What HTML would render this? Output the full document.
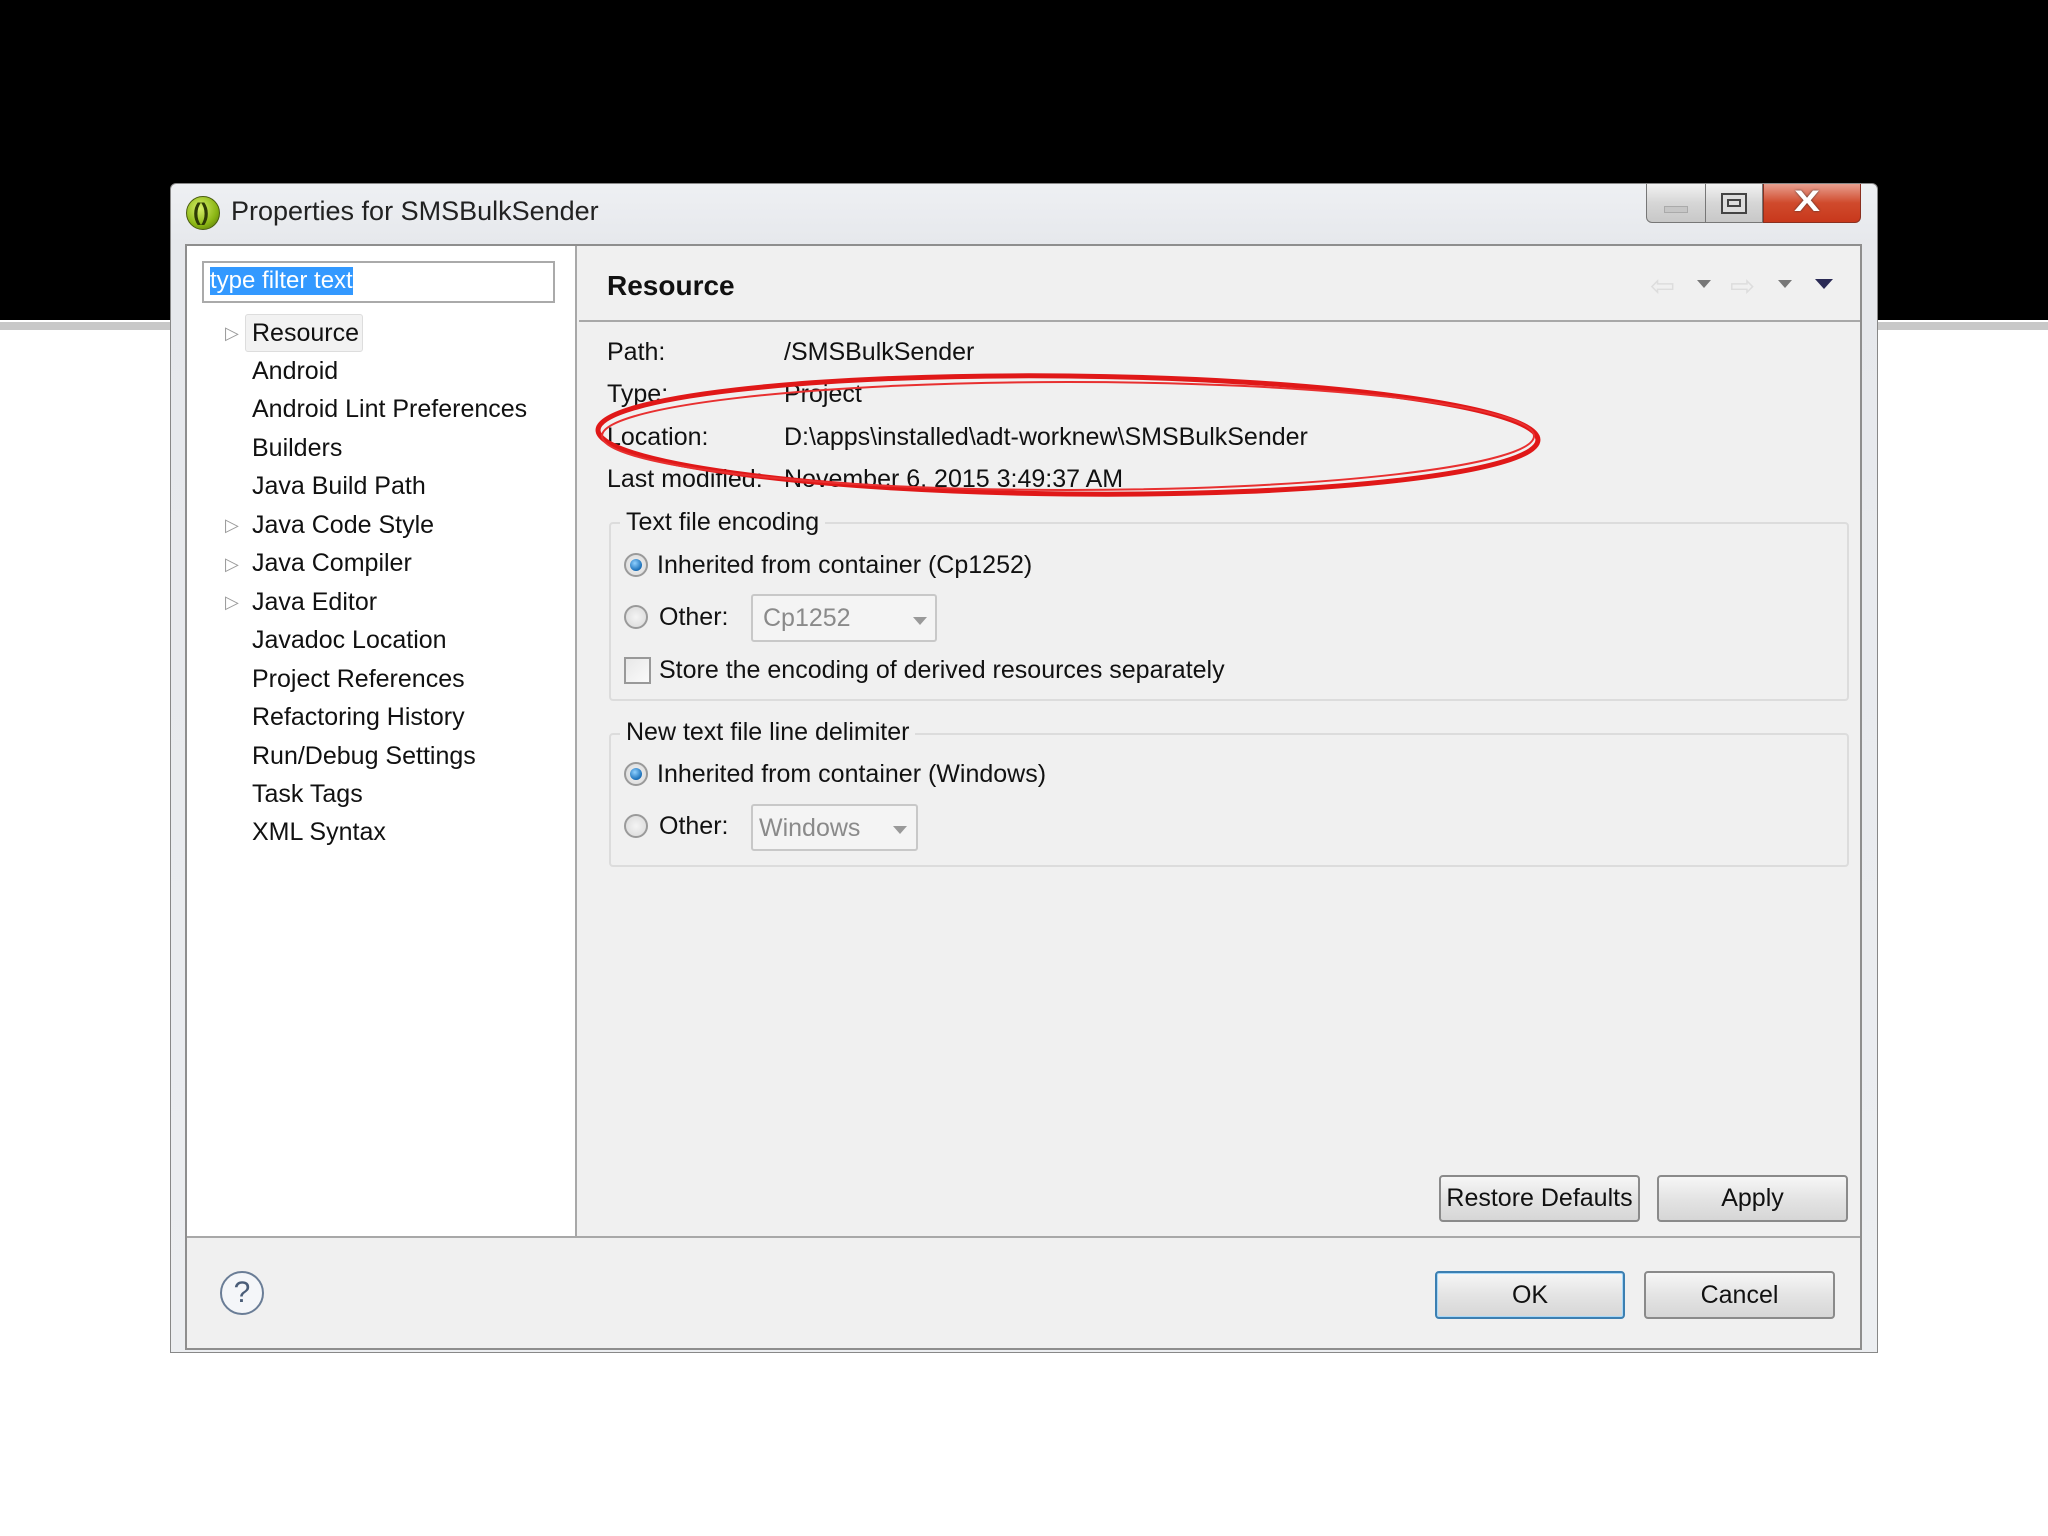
<!DOCTYPE html>
<html><head><meta charset="utf-8"><style>
*{margin:0;padding:0;box-sizing:border-box}
body{width:2048px;height:1536px;background:#fff;position:relative;overflow:hidden;font-family:"Liberation Sans",sans-serif;color:#111}
.a{position:absolute;white-space:nowrap}
.t{font-size:25px;line-height:30px}
.radio{position:absolute;width:24px;height:24px;border-radius:50%;border:2px solid #9a9a9a;background:radial-gradient(circle,#f4f4f4,#d8d8d8)}
.radio.on::after{content:"";position:absolute;left:4px;top:4px;width:12px;height:12px;border-radius:50%;background:radial-gradient(circle at 40% 35%,#8fd0ff,#1a6fb8 70%,#0c3f78)}
.combo{position:absolute;border:2px solid #c8c8c8;background:#f4f4f4;border-radius:3px;color:#8a8a8a}
.btn{position:absolute;border:2px solid #8a8a8a;border-radius:4px;background:linear-gradient(#f6f6f6,#e4e4e4 50%,#d6d6d6);text-align:center;font-size:25px}
.tri{position:absolute;width:0;height:0;border-left:7px solid transparent;border-right:7px solid transparent;border-top:8px solid #777}
</style></head><body>
<div class="a" style="left:0;top:0;width:2048px;height:320px;background:#000"></div>
<div class="a" style="left:0;top:322px;width:2048px;height:8px;background:#c8c8c8"></div>
<div class="a" style="left:170px;top:183px;width:1708px;height:1170px;background:linear-gradient(#eef0f3,#e6e8ec 60px,#eceef1);border:1px solid #888;border-radius:6px 6px 0 0"></div>
<div class="a" style="left:186px;top:196px;width:34px;height:34px;border-radius:50%;background:radial-gradient(circle at 40% 35%,#d8f06a,#8ab514 60%,#4d6b08);border:1px solid #4a5d10"></div>
<div class="a" style="left:193px;top:196px;font-size:24px;font-weight:bold;color:#2e3a05;line-height:34px">()</div>
<div class="a" style="left:231px;top:196px;font-size:27px;color:#222">Properties for SMSBulkSender</div>
<div class="a" style="left:1646px;top:184px;width:117px;height:39px;border:1px solid #777;border-top:none;border-radius:0 0 0 6px;background:linear-gradient(#f2f2f2,#d6d6d6 50%,#c8c8c8)"></div>
<div class="a" style="left:1705px;top:184px;width:1px;height:39px;background:#777"></div>
<div class="a" style="left:1664px;top:206px;width:24px;height:7px;background:#c6c6c6;border:1px solid #aaa"></div>
<div class="a" style="left:1721px;top:193px;width:26px;height:21px;border:2px solid #444;background:#ddd"></div>
<div class="a" style="left:1727px;top:199px;width:14px;height:8px;border:2px solid #444"></div>
<div class="a" style="left:1763px;top:184px;width:98px;height:39px;border:1px solid #8a3020;border-top:none;border-radius:0 0 6px 0;background:linear-gradient(#e8a090,#d04a2c 50%,#c8381c)"></div>
<div class="a" style="left:1797px;top:185px;font-size:30px;font-weight:bold;color:#fff;text-shadow:0 0 2px #333;transform:scaleX(1.3)">X</div>
<div class="a" style="left:185px;top:244px;width:1677px;height:1106px;background:#f0f0f0;border:2px solid #8e8e8e"></div>
<div class="a" style="left:187px;top:246px;width:390px;height:990px;background:#fff;border-right:2px solid #a8a8a8"></div>
<div class="a" style="left:187px;top:1236px;width:1673px;height:2px;background:#a8a8a8"></div>
<div class="a" style="left:202px;top:261px;width:353px;height:42px;border:2px solid #aaa;background:#fff"></div>
<div class="a t" style="left:210px;top:267px;background:#3399ff;color:#fff;font-size:24px;line-height:28px">type filter text</div>
<div class="a" style="left:245px;top:314px;width:118px;height:38px;background:#f2f2f2;border:1px solid #ddd;border-radius:3px"></div>
<div class="a t" style="left:225px;top:318px;color:#999;font-size:18px">▷</div>
<div class="a t" style="left:225px;top:510px;color:#999;font-size:18px">▷</div>
<div class="a t" style="left:225px;top:549px;color:#999;font-size:18px">▷</div>
<div class="a t" style="left:225px;top:587px;color:#999;font-size:18px">▷</div>
<div class="a t" style="left:252px;top:318px">Resource</div>
<div class="a t" style="left:252px;top:356px">Android</div>
<div class="a t" style="left:252px;top:394px">Android Lint Preferences</div>
<div class="a t" style="left:252px;top:433px">Builders</div>
<div class="a t" style="left:252px;top:471px">Java Build Path</div>
<div class="a t" style="left:252px;top:510px">Java Code Style</div>
<div class="a t" style="left:252px;top:548px">Java Compiler</div>
<div class="a t" style="left:252px;top:587px">Java Editor</div>
<div class="a t" style="left:252px;top:625px">Javadoc Location</div>
<div class="a t" style="left:252px;top:664px">Project References</div>
<div class="a t" style="left:252px;top:702px">Refactoring History</div>
<div class="a t" style="left:252px;top:741px">Run/Debug Settings</div>
<div class="a t" style="left:252px;top:779px">Task Tags</div>
<div class="a t" style="left:252px;top:817px">XML Syntax</div>
<div class="a" style="left:607px;top:270px;font-size:28px;font-weight:bold">Resource</div>
<div class="a" style="left:579px;top:320px;width:1281px;height:2px;background:#a8a8a8"></div>
<div class="a" style="left:1650px;top:272px;font-size:30px;color:#ddd;line-height:30px">⇦</div>
<div class="tri" style="left:1697px;top:280px"></div>
<div class="a" style="left:1730px;top:272px;font-size:30px;color:#ddd;line-height:30px">⇨</div>
<div class="tri" style="left:1778px;top:280px"></div>
<div class="tri" style="left:1815px;top:279px;border-top-color:#2a2a55;border-left-width:9px;border-right-width:9px;border-top-width:10px"></div>
<div class="a t" style="left:607px;top:337px">Path:</div><div class="a t" style="left:784px;top:337px">/SMSBulkSender</div>
<div class="a t" style="left:607px;top:379px">Type:</div><div class="a t" style="left:784px;top:379px">Project</div>
<div class="a t" style="left:607px;top:422px">Location:</div><div class="a t" style="left:784px;top:422px">D:\apps\installed\adt-worknew\SMSBulkSender</div>
<div class="a t" style="left:607px;top:464px">Last modified:</div><div class="a t" style="left:784px;top:464px">November 6, 2015 3:49:37 AM</div>
<div class="a" style="left:609px;top:522px;width:1240px;height:179px;border:2px solid #dcdcdc;border-radius:4px"></div>
<div class="a t" style="left:620px;top:507px;background:#f0f0f0;padding:0 6px">Text file encoding</div>
<div class="radio on" style="left:624px;top:553px"></div>
<div class="a t" style="left:657px;top:550px">Inherited from container (Cp1252)</div>
<div class="radio" style="left:624px;top:605px"></div>
<div class="a t" style="left:659px;top:602px">Other:</div>
<div class="combo" style="left:751px;top:594px;width:186px;height:48px"><span class="a t" style="left:10px;top:7px;color:#8a8a8a">Cp1252</span><div class="tri" style="left:160px;top:21px;border-top-color:#999"></div></div>
<div class="a" style="left:624px;top:657px;width:27px;height:27px;border:2px solid #999;background:linear-gradient(135deg,#e8e8e8,#fafafa)"></div>
<div class="a t" style="left:659px;top:655px">Store the encoding of derived resources separately</div>
<div class="a" style="left:609px;top:733px;width:1240px;height:134px;border:2px solid #dcdcdc;border-radius:4px"></div>
<div class="a t" style="left:620px;top:717px;background:#f0f0f0;padding:0 6px">New text file line delimiter</div>
<div class="radio on" style="left:624px;top:762px"></div>
<div class="a t" style="left:657px;top:759px">Inherited from container (Windows)</div>
<div class="radio" style="left:624px;top:814px"></div>
<div class="a t" style="left:659px;top:811px">Other:</div>
<div class="combo" style="left:751px;top:804px;width:167px;height:47px"><span class="a t" style="left:6px;top:7px;color:#8a8a8a">Windows</span><div class="tri" style="left:140px;top:20px;border-top-color:#999"></div></div>
<div class="btn" style="left:1439px;top:1175px;width:201px;height:47px;line-height:43px">Restore Defaults</div>
<div class="btn" style="left:1657px;top:1175px;width:191px;height:47px;line-height:43px">Apply</div>
<div class="btn" style="left:1435px;top:1271px;width:190px;height:48px;line-height:44px;border-color:#3c7fb1;box-shadow:inset 0 0 0 1px #a8d8f8">OK</div>
<div class="btn" style="left:1644px;top:1271px;width:191px;height:48px;line-height:44px">Cancel</div>
<div class="a" style="left:220px;top:1271px;width:44px;height:44px;border-radius:50%;border:2px solid #6a7d96;background:#f4f6f9;text-align:center;font-size:30px;line-height:40px;color:#4a5d78">?</div>
<svg class="a" style="left:0;top:0" width="2048" height="1536"><ellipse cx="1068" cy="435" rx="470" ry="59" fill="none" stroke="#e01818" stroke-width="5" transform="rotate(0.6 1068 435)"/><ellipse cx="1068" cy="436" rx="466" ry="54" fill="none" stroke="#e83030" stroke-width="2"/></svg>
</body></html>
